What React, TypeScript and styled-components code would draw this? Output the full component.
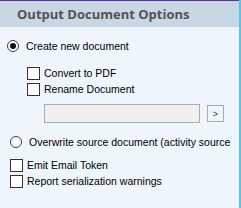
import styled, { createGlobalStyle } from "styled-components";

const Global = createGlobalStyle`
    html, body {
        margin: 0;
        padding: 0;
        background: #eef5fd;
    }
`;

const Panel = styled.div`
    width: 241px;
    height: 208px;
    box-sizing: border-box;
    display: flex;
    flex-direction: column;
    background: #eef5fd;
    border-right: 2px solid #5bc3e3;
    overflow: hidden;
    font-family: "Liberation Sans", Arial, sans-serif;
    font-size: 10.5px;
    color: #000;
`;

const Header = styled.div`
    height: 26px;
    flex: none;
    display: flex;
    align-items: center;
    padding-left: 17px;
    background: #c9d7e4;
    border-top: 1px solid #5a2da0;
    font-family: "Open Sans", sans-serif;
    font-weight: 700;
    font-size: 13px;
    color: #535353;
`;

const Content = styled.div`
    display: flex;
    flex-direction: column;
    padding-top: 11px;
`;

const Row = styled.div<{ $indent: number; $gap: number; $top?: number }>`
    display: flex;
    align-items: center;
    height: 16px;
    padding-left: ${(p) => p.$indent}px;
    margin-top: ${(p) => p.$top ?? 0}px;
    gap: ${(p) => p.$gap}px;
    white-space: nowrap;
`;

const Radio = styled.span<{ $checked?: boolean }>`
    flex: none;
    width: 12px;
    height: 12px;
    box-sizing: border-box;
    border-radius: 50%;
    border: 1px solid #3c3c3c;
    background: #fff;
    display: flex;
    align-items: center;
    justify-content: center;

    &::after {
        content: "";
        display: ${(p) => (p.$checked ? "block" : "none")};
        width: 6px;
        height: 6px;
        border-radius: 50%;
        background: #111;
    }
`;

const Check = styled.span`
    flex: none;
    width: 13px;
    height: 13px;
    box-sizing: border-box;
    border: 1px solid #333;
    background: #fff;
`;

const InputRow = styled.div`
    display: flex;
    align-items: center;
    gap: 7px;
    padding-left: 44px;
    margin-top: 7px;
`;

const TextBox = styled.div`
    width: 156px;
    height: 19px;
    box-sizing: border-box;
    border: 1px solid #ababab;
    background: #f0f0f0;
`;

const SmallButton = styled.div`
    width: 17px;
    height: 17px;
    box-sizing: border-box;
    border: 1px solid #ababab;
    background: #eef5fd;
    display: flex;
    align-items: center;
    justify-content: center;
    font-size: 9px;
    color: #334;
`;

export default function App(): JSX.Element {
    return (
        <>
            <Global />
            <Panel>
                <Header>Output Document Options</Header>
                <Content>
                    <Row $indent={7} $gap={7}>
                        <Radio $checked />
                        <span>Create new document</span>
                    </Row>
                    <Row $indent={27} $gap={4} $top={11}>
                        <Check />
                        <span>Convert to PDF</span>
                    </Row>
                    <Row $indent={27} $gap={4}>
                        <Check />
                        <span>Rename Document</span>
                    </Row>
                    <InputRow>
                        <TextBox />
                        <SmallButton>&gt;</SmallButton>
                    </InputRow>
                    <Row $indent={10} $gap={7} $top={11}>
                        <Radio />
                        <span>Overwrite source document (activity source</span>
                    </Row>
                    <Row $indent={10} $gap={4} $top={7}>
                        <Check />
                        <span>Emit Email Token</span>
                    </Row>
                    <Row $indent={10} $gap={4}>
                        <Check />
                        <span>Report serialization warnings</span>
                    </Row>
                </Content>
            </Panel>
        </>
    );
}
